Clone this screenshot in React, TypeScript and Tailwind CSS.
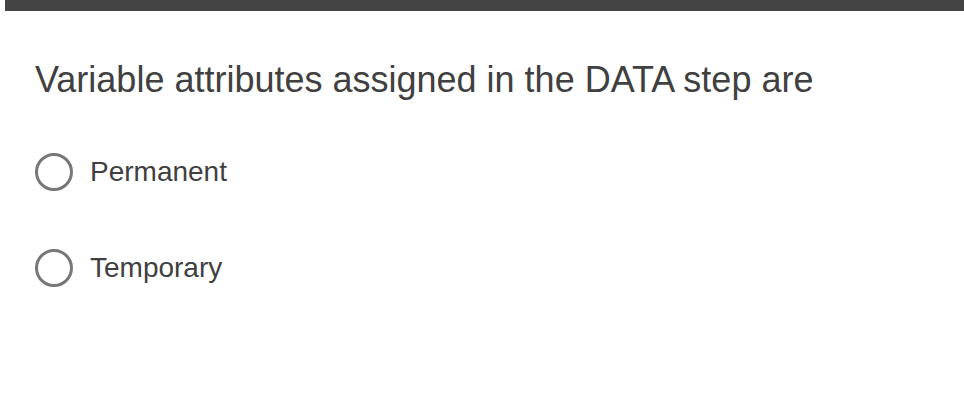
export default function App() {
  return (
    <div className="w-[964px] h-[414px] bg-white" style={{ fontFamily: '"Liberation Sans", Arial, sans-serif' }}>
      <div className="ml-[5px] h-[11px] bg-[#444444]" />
      <div className="pl-[35px] pt-[49px]">
        <h1 className="text-[36px] leading-[40px] text-[#404040]">Variable attributes assigned in the DATA step are</h1>
        <div className="mt-[53px] flex flex-col gap-[58px]">
          {["Permanent", "Temporary"].map((t) => (
            <label key={t} className="flex items-center gap-[17px]">
              <span className="w-[38px] h-[38px] rounded-full border-[3px] border-[#777777] shrink-0" />
              <span className="text-[28px] leading-[38px] text-[#404040]">{t}</span>
            </label>
          ))}
        </div>
      </div>
    </div>
  );
}
